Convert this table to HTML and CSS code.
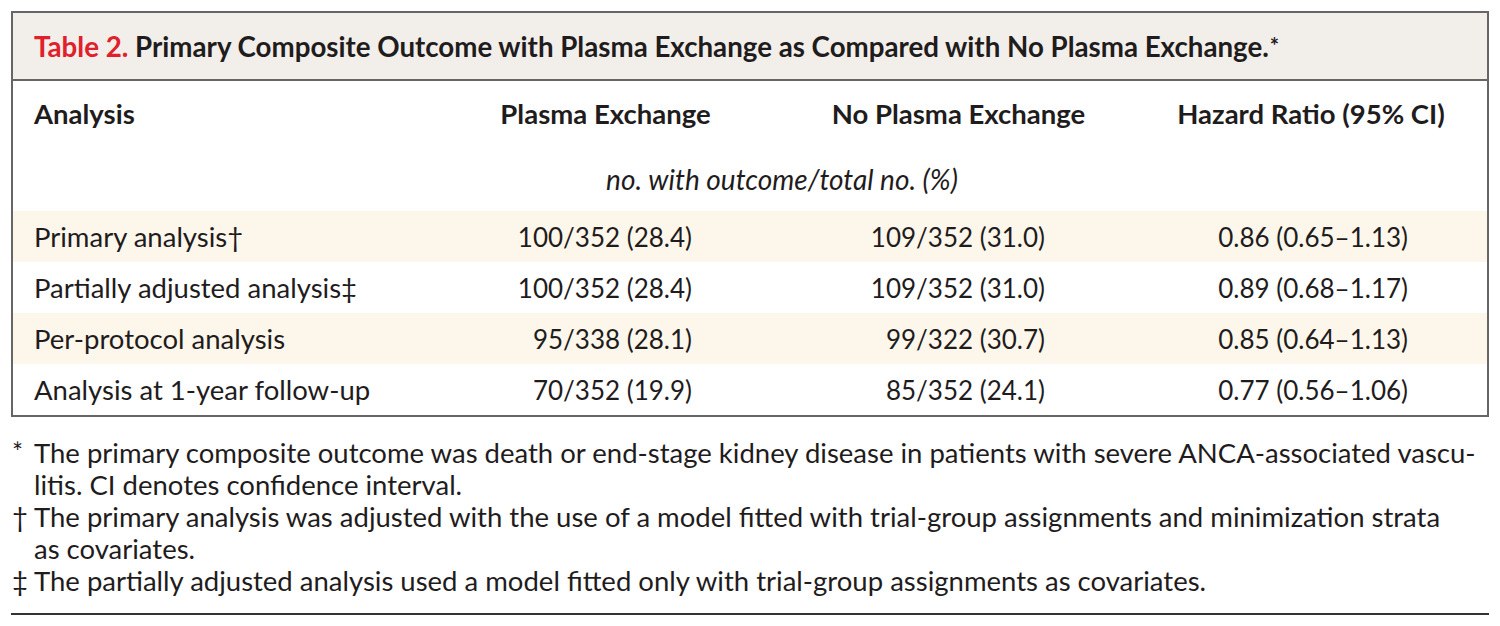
FILE: index.html
```html
<!DOCTYPE html>
<html>
<head>
<meta charset="utf-8">
<link rel="stylesheet" href="styles.css">
</head>
<body>
<div class="page">
  <div class="table-box">
    <div class="title"><span class="label">Table 2.</span> Primary Composite Outcome with Plasma Exchange as Compared with No Plasma Exchange.<span class="star">*</span></div>
    <div class="grid">
      <div class="cell head first">Analysis</div>
      <div class="cell head center">Plasma Exchange</div>
      <div class="cell head center">No Plasma Exchange</div>
      <div class="cell head center">Hazard Ratio (95% CI)</div>

      <div class="cell sub first"></div>
      <div class="cell sub span2">no. with outcome/total no. (%)</div>
      <div class="cell sub"></div>

      <div class="cell row shade first">Primary analysis†</div>
      <div class="cell row shade num">100/352 (28.4)</div>
      <div class="cell row shade num">109/352 (31.0)</div>
      <div class="cell row shade hr">0.86 (0.65–1.13)</div>

      <div class="cell row first">Partially adjusted analysis‡</div>
      <div class="cell row num">100/352 (28.4)</div>
      <div class="cell row num">109/352 (31.0)</div>
      <div class="cell row hr">0.89 (0.68–1.17)</div>

      <div class="cell row shade first">Per-protocol analysis</div>
      <div class="cell row shade num">95/338 (28.1)</div>
      <div class="cell row shade num">99/322 (30.7)</div>
      <div class="cell row shade hr">0.85 (0.64–1.13)</div>

      <div class="cell row first">Analysis at 1-year follow-up</div>
      <div class="cell row num">70/352 (19.9)</div>
      <div class="cell row num">85/352 (24.1)</div>
      <div class="cell row hr">0.77 (0.56–1.06)</div>
    </div>
  </div>
  <div class="notes">
    <div class="sym star-note">*</div>
    <div class="txt">The primary composite outcome was death or end-stage kidney disease in patients with severe ANCA-associated vascu-<br>litis. CI denotes confidence interval.</div>
    <div class="sym">†</div>
    <div class="txt">The primary analysis was adjusted with the use of a model fitted with trial-group assignments and minimization strata<br>as covariates.</div>
    <div class="sym">‡</div>
    <div class="txt">The partially adjusted analysis used a model fitted only with trial-group assignments as covariates.</div>
  </div>
</div>
</body>
</html>
```
FILE: styles.css
```css
html, body {
  margin: 0;
  padding: 0;
  background: #ffffff;
}
body {
  font-family: Lato, "Open Sans", "Liberation Sans", sans-serif;
  color: #1f1c1d;
}
.page {
  width: 1478px;
  margin: 11px 0 0 11px;
}
.table-box {
  border: 2px solid #666666;
}
.title {
  background: #f2eee9;
  border-bottom: 2px solid #666666;
  box-sizing: border-box;
  height: 68px;
  padding-left: 21px;
  display: flex;
  align-items: center;
  font-weight: 700;
  font-size: 27.7px;
  white-space: pre;
}
.title .label {
  color: #e0202a;
}
.title .star {
  font-size: 22px;
  align-self: flex-start;
  margin-top: 19px;
  margin-left: 1px;
}
.grid {
  display: grid;
  grid-template-columns: 416px 353px 353px 352px;
}
.cell {
  display: flex;
  align-items: center;
  font-size: 27.5px;
}
.first {
  padding-left: 21px;
}
.head {
  height: 65px;
  font-weight: 700;
  font-size: 27.5px;
}
.center {
  justify-content: center;
}
.sub {
  height: 65px;
  font-style: italic;
  font-size: 28px;
}
.span2 {
  grid-column: span 2;
  justify-content: center;
}
.row {
  height: 51px;
}
.shade {
  background: #fdf6ea;
}
.num {
  justify-content: flex-end;
  padding-right: 90px;
  font-size: 26px;
}
.hr {
  justify-content: flex-end;
  padding-right: 79px;
  font-size: 26px;
}
.notes {
  display: grid;
  grid-template-columns: 23px 1fr;
  font-size: 27.5px;
  line-height: 32px;
  padding: 20px 0 16px 0;
  border-bottom: 2px solid #333333;
}
.sym {
  padding-left: 1px;
}
.star-note {
  font-size: 26px;
  line-height: 30px;
}
```
